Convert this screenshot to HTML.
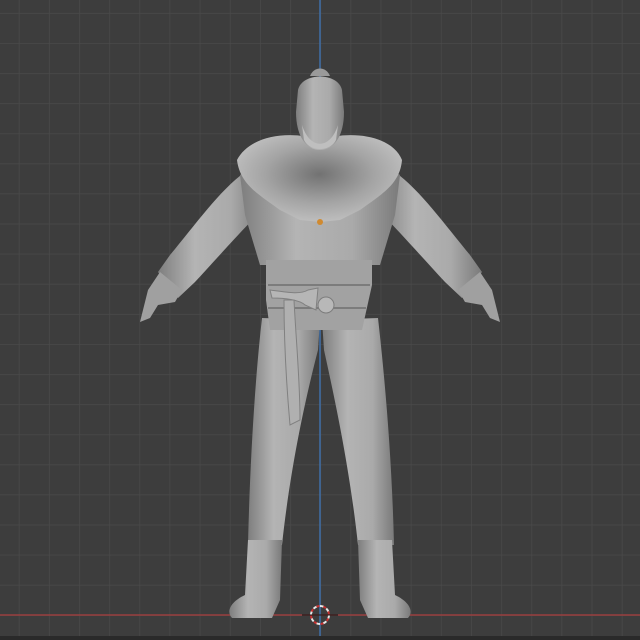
<!DOCTYPE html>
<html><head><style>
html,body{margin:0;padding:0;background:#3d3d3d;}
svg{display:block}
</style></head><body>
<svg width="640" height="640" viewBox="0 0 640 640" xmlns="http://www.w3.org/2000/svg">
<defs>
<pattern id="g" x="18.8" y="12.9" width="30.15" height="30.1" patternUnits="userSpaceOnUse">
<path d="M0 0H30.15M0 0V30.1" stroke="#4a4a4a" stroke-width="1.4" fill="none"/>
</pattern>
<linearGradient id="b" x1="0" x2="1" y1="0" y2="0">
<stop offset="0" stop-color="#7e7e7e"/><stop offset="0.35" stop-color="#b4b4b4"/><stop offset="0.7" stop-color="#aaaaaa"/><stop offset="1" stop-color="#7a7a7a"/>
</linearGradient>
<radialGradient id="fur" cx="0.5" cy="0.45" r="0.6">
<stop offset="0" stop-color="#727272"/><stop offset="0.55" stop-color="#a4a4a4"/><stop offset="1" stop-color="#c4c4c4"/>
</radialGradient>
</defs>
<rect width="640" height="640" fill="#3d3d3d"/>
<rect width="640" height="640" fill="url(#g)"/>
<line x1="0" y1="615" x2="640" y2="615" stroke="#9a3f3f" stroke-width="1.5"/>
<line x1="320" y1="0" x2="320" y2="636" stroke="#3f6fa8" stroke-width="1.5"/>
<!-- arms -->
<path d="M245 172 C220 190 195 225 170 255 L158 272 L178 298 L195 282 C220 255 242 230 262 210Z" fill="url(#b)"/>
<path d="M395 172 C420 190 445 225 470 255 L482 272 L462 298 L445 282 C420 255 398 230 378 210Z" fill="url(#b)"/>
<path d="M160 272 L148 290 L140 322 L150 318 L158 305 L175 302 L182 290Z" fill="#a0a0a0"/>
<path d="M480 272 L492 290 L500 322 L490 318 L482 305 L465 302 L458 290Z" fill="#a0a0a0"/>
<!-- legs -->
<path d="M262 318 C255 380 250 460 248 545 L282 545 C290 470 305 400 318 350 L320 320Z" fill="url(#b)"/>
<path d="M378 318 C385 380 392 460 394 545 L358 545 C350 470 335 400 324 350 L322 320Z" fill="url(#b)"/>
<!-- boots -->
<path d="M248 540 L282 540 L280 600 L272 618 L232 618 C226 612 230 602 245 595Z" fill="url(#b)"/>
<path d="M358 540 L392 540 L395 595 C410 602 414 612 408 618 L368 618 L360 600Z" fill="url(#b)"/>
<!-- torso -->
<path d="M240 175 C250 165 390 165 400 175 L395 215 L380 265 L260 265 L245 215Z" fill="url(#b)"/>
<!-- belt -->
<path d="M266 260 L372 260 L372 285 L362 330 L270 330 L266 300Z" fill="#a2a2a2"/>
<line x1="268" y1="285" x2="370" y2="285" stroke="#7c7c7c" stroke-width="2"/>
<line x1="268" y1="308" x2="366" y2="308" stroke="#7c7c7c" stroke-width="2"/>
<circle cx="326" cy="305" r="8" fill="#b8b8b8" stroke="#7c7c7c"/>
<!-- axe -->
<path d="M270 290 C285 292 300 295 308 290 L318 288 L316 310 L305 305 C300 300 285 298 272 298Z" fill="#b6b6b6" stroke="#808080"/>
<path d="M284 300 L294 300 C296 340 300 380 300 420 L290 425 C286 380 284 340 284 300Z" fill="#b0b0b0" stroke="#808080"/>
<!-- fur -->
<path d="M237 160 C250 135 290 130 320 140 C350 130 392 135 402 160 C400 185 380 195 360 210 L340 220 L320 222 L300 220 L280 210 C260 195 240 185 237 160Z" fill="url(#fur)"/>
<circle cx="320" cy="222" r="3" fill="#d08a30"/>
<!-- head -->
<path d="M298 90 C302 72 338 72 342 90 L344 112 C344 136 334 150 320 150 C306 150 296 136 296 112Z" fill="url(#b)"/>
<path d="M310 76 C314 66 326 66 330 76Z" fill="#9a9a9a"/>
<path d="M302 125 C310 150 330 150 338 125 L336 140 C330 152 310 152 304 140Z" fill="#bfbfbf"/>
<!-- cursor -->
<circle cx="320" cy="615" r="9" fill="none" stroke="#e8e8e8" stroke-width="2" stroke-dasharray="4 3"/>
<circle cx="320" cy="615" r="9" fill="none" stroke="#c83030" stroke-width="2" stroke-dasharray="3 4" stroke-dashoffset="3.5"/>
<line x1="302" y1="615" x2="338" y2="615" stroke="#111" stroke-width="1"/>
<rect y="636" width="640" height="4" fill="#2a2a2a"/>
</svg>
</body></html>
